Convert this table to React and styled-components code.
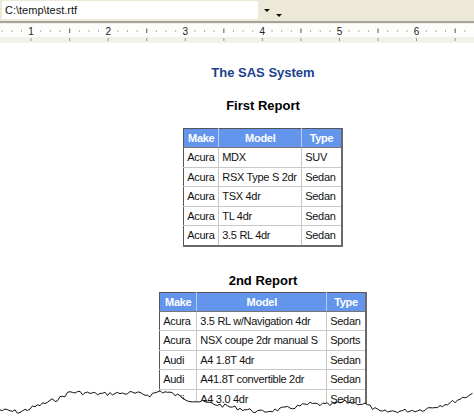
import React from 'react'
import styled, { createGlobalStyle } from 'styled-components'

const first = [
	['Acura', 'MDX', 'SUV'],
	['Acura', 'RSX Type S 2dr', 'Sedan'],
	['Acura', 'TSX 4dr', 'Sedan'],
	['Acura', 'TL 4dr', 'Sedan'],
	['Acura', '3.5 RL 4dr', 'Sedan'],
];
const second = [
	['Acura', '3.5 RL w/Navigation 4dr', 'Sedan'],
	['Acura', 'NSX coupe 2dr manual S', 'Sports'],
	['Audi', 'A4 1.8T 4dr', 'Sedan'],
	['Audi', 'A41.8T convertible 2dr', 'Sedan'],
	['Audi', 'A4 3.0 4dr', 'Sedan'],
];

// torn paper edge along the bottom
const tearPoints = [
	[0, 20], [20, 22], [40, 15], [60, 8], [70, 2], [100, 4], [130, 3], [150, 5], [160, 1],
	[170, 3], [190, 10], [220, 15], [260, 22], [290, 18], [310, 14], [330, 15], [345, 12],
	[365, 14], [380, 22], [420, 20], [450, 13], [474, 3],
];
function tearPath() {
	let seed = 7;
	const rnd = () => {
		seed = (seed * 9301 + 49297) % 233280;
		return seed / 233280;
	};
	const baseY = (x) => {
		for (let i = 0; i < tearPoints.length - 1; i++) {
			const [x0, y0] = tearPoints[i];
			const [x1, y1] = tearPoints[i + 1];
			if (x >= x0 && x <= x1) return y0 + ((x - x0) / (x1 - x0)) * (y1 - y0);
		}
		return 3;
	};
	const pts = [];
	for (let x = 0; x <= 474; x += 2.5) {
		pts.push(`${x.toFixed(1)},${(baseY(x) + (rnd() - 0.5) * 4).toFixed(1)}`);
	}
	return pts;
}

function Ruler() {
	const inch = 77.1;
	const start = -46;
	const marks = [];
	for (let i = 0; i < 64; i++) {
		const x = start + (i * inch) / 8;
		if (x < 0 || x > 474) continue;
		const n = Math.floor(i / 8);
		if (i % 8 === 0) {
			marks.push(<RulerNum key={i} x={x} y={11.5} textAnchor="middle">{n}</RulerNum>);
			marks.push(<line key={'t' + i} x1={x} x2={x} y1={15} y2={18} stroke="#9a9a90" />);
		} else if (i % 4 === 0) {
			marks.push(<line key={i} x1={x} x2={x} y1={5.5} y2={10} stroke="#555" />);
			marks.push(<line key={'t' + i} x1={x} x2={x} y1={15} y2={18} stroke="#9a9a90" />);
		} else {
			marks.push(<rect key={i} x={x - 0.5} y={7.5} width={1} height={1} fill="#666" />);
		}
	}
	return (
		<RulerBar>
			<svg width="474" height="20" viewBox="0 0 474 20">
				<rect x="0" y="1" width="474" height="13" fill="#fdfdfb" />
				{marks}
			</svg>
		</RulerBar>
	);
}

function Report({ rows, widths, cut }) {
	return (
		<Table $cut={cut}>
			<colgroup>
				{widths.map((w, i) => <col key={i} style={{ width: w }} />)}
			</colgroup>
			<thead>
				<tr>
					<Th>Make</Th>
					<Th>Model</Th>
					<Th>Type</Th>
				</tr>
			</thead>
			<tbody>
				{rows.map((r, i) => (
					<tr key={i}>
						{r.map((c, j) => <Td key={j}>{c}</Td>)}
					</tr>
				))}
			</tbody>
		</Table>
	);
}

function App() {
	const tear = tearPath();
	return (
		<Container>
			<GlobalStyle />
			<Toolbar>
				<PathBox>C:\temp\test.rtf</PathBox>
				<Arrow />
				<Chevron><Arrow /></Chevron>
			</Toolbar>
			<Ruler />
			<Page>
				<Title>The SAS System</Title>
				<Heading>First Report</Heading>
				<Report rows={first} widths={[35, 83, 40]} />
				<Heading $second>2nd Report</Heading>
				<Report rows={second} widths={[37, 130, 39]} cut />
			</Page>
			<Tear viewBox="0 0 474 40" width="474" height="40">
				<polygon points={[...tear, '474,40', '0,40'].join(' ')} fill="#fff" />
				<polyline points={tear.join(' ')} fill="none" stroke="#111" strokeWidth="1" />
			</Tear>
		</Container>
	)
}

const GlobalStyle = createGlobalStyle`
	body {
		margin: 0;
		background: #fff;
		font-family: "Liberation Sans", Arial, sans-serif;
		overflow: hidden;
	}
`;
const Container = styled.div`
	width: 474px;
	height: 420px;
	position: relative;
	overflow: hidden;
	background: #fff;
`;
const Toolbar = styled.div`
	height: 23px;
	background: #ece9d8;
	display: flex;
	align-items: center;
	padding-left: 2px;
	box-sizing: border-box;
	border-bottom: 2px solid #a6a49a;
`;
const PathBox = styled.div`
	width: 253px;
	height: 18px;
	background: #fff;
	font-size: 11px;
	line-height: 18px;
	padding-left: 3px;
	color: #111;
	margin-top: -1px;
`;
const Arrow = styled.div`
	width: 0;
	height: 0;
	margin-left: 6px;
	border-left: 3px solid transparent;
	border-right: 3px solid transparent;
	border-top: 3px solid #111;
`;
const Chevron = styled.div`
	display: flex;
	margin-top: 9px;
`;
const RulerBar = styled.div`
	height: 20px;
	background: #f3f2ea;
	svg { display: block; }
`;
const RulerNum = styled.text`
	font-size: 10px;
	font-family: "Liberation Sans", Arial, sans-serif;
	fill: #222;
`;
const Page = styled.div`
	padding-left: 52px;
	display: flex;
	flex-direction: column;
	align-items: center;
`;
const Title = styled.div`
	margin-top: 22px;
	font-size: 13px;
	font-weight: bold;
	color: #213f8c;
	line-height: 16px;
`;
const Heading = styled.div`
	margin-top: ${p => (p.$second ? '26px' : '17px')};
	margin-bottom: ${p => (p.$second ? '3px' : '14px')};
	font-size: 13px;
	font-weight: bold;
	color: #000;
	line-height: 16px;
`;
const Table = styled.table`
	border-collapse: collapse;
	table-layout: fixed;
	border-top: 1px solid #555;
	border-left: 1px solid #555;
	border-right: 2px solid #6a6a6a;
	border-bottom: ${p => (p.$cut ? 'none' : '2px solid #6a6a6a')};
	font-size: 11px;
	letter-spacing: -0.3px;
`;
const Th = styled.th`
	background: #6495ed;
	color: #fff;
	font-weight: bold;
	height: 18px;
	padding: 0 3px;
	text-align: center;
	border-left: 1px solid #b8cdf4;
	border-bottom: 1px solid #777;
	&:first-child { border-left: none; }
`;
const Td = styled.td`
	height: 18.5px;
	padding: 0 3px;
	color: #111;
	white-space: nowrap;
	overflow: hidden;
	border-left: 1px solid #c8c8c8;
	border-top: 1px solid #c8c8c8;
	&:first-child { border-left: none; }
`;
const Tear = styled.svg`
	position: absolute;
	left: 0;
	top: 390px;
	display: block;
`;

export default App
